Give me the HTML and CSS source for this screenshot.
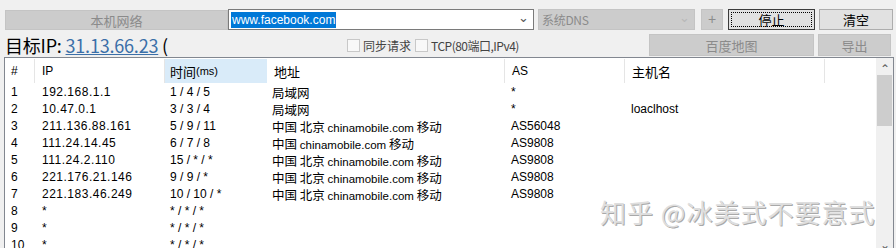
FILE: index.html
```html
<!DOCTYPE html>
<html lang="zh">
<head>
<meta charset="utf-8">
<title>Trace</title>
<link rel="stylesheet" href="styles.css">
</head>
<body>
<div class="app">
  <div class="toolbar">
    <button class="btn disabled local">本机网络</button>
    <div class="combo host">
      <span class="sel">www.facebook.com</span>
      <span class="chev">&#8964;</span>
    </div>
    <div class="combo dns disabled-combo">
      <span class="dns-text">系统DNS</span>
      <span class="chev light">&#8964;</span>
    </div>
    <button class="btn disabled plus">+</button>
    <button class="btn stop"><span class="focus">停止</span></button>
    <button class="btn clear">清空</button>
  </div>
  <div class="row2">
    <div class="target">目标IP: <a class="ip-link">31.13.66.23</a> (</div>
    <label class="chk"><span class="box"></span>同步请求</label>
    <label class="chk tcp"><span class="box"></span>TCP(80端口,IPv4)</label>
    <button class="btn disabled map">百度地图</button>
    <button class="btn disabled export">导出</button>
  </div>
  <div class="list">
    <div class="grid">
      <div class="head">
        <div class="hc c1">#</div>
        <div class="hc c2">IP</div>
        <div class="hc c3 hot">时间<span class="ms">(ms)</span></div>
        <div class="hc c4">地址</div>
        <div class="hc c5">AS</div>
        <div class="hc c6">主机名</div>
        <div class="hc c7"></div>
      </div>
      <div class="body">
        <div class="r"><span>1</span><span class="ip">192.168.1.1</span><span>1 / 4 / 5</span><span class="zh">局域网</span><span>*</span><span></span></div>
        <div class="r"><span>2</span><span class="ip">10.47.0.1</span><span>3 / 3 / 4</span><span class="zh">局域网</span><span>*</span><span>loaclhost</span></div>
        <div class="r"><span>3</span><span class="ip">211.136.88.161</span><span>5 / 9 / 11</span><span class="zh">中国 北京 <i>chinamobile.com</i> 移动</span><span>AS56048</span><span></span></div>
        <div class="r"><span>4</span><span class="ip">111.24.14.45</span><span>6 / 7 / 8</span><span class="zh">中国 <i>chinamobile.com</i> 移动</span><span>AS9808</span><span></span></div>
        <div class="r"><span>5</span><span class="ip">111.24.2.110</span><span>15 / * / *</span><span class="zh">中国 北京 <i>chinamobile.com</i> 移动</span><span>AS9808</span><span></span></div>
        <div class="r"><span>6</span><span class="ip">221.176.21.146</span><span>9 / 9 / *</span><span class="zh">中国 北京 <i>chinamobile.com</i> 移动</span><span>AS9808</span><span></span></div>
        <div class="r"><span>7</span><span class="ip">221.183.46.249</span><span>10 / 10 / *</span><span class="zh">中国 北京 <i>chinamobile.com</i> 移动</span><span>AS9808</span><span></span></div>
        <div class="r"><span>8</span><span class="ip">*</span><span>* / * / *</span><span></span><span></span><span></span></div>
        <div class="r"><span>9</span><span class="ip">*</span><span>* / * / *</span><span></span><span></span><span></span></div>
        <div class="r"><span>10</span><span class="ip">*</span><span>* / * / *</span><span></span><span></span><span></span></div>
      </div>
    </div>
    <div class="scroll">
      <div class="arrow up">&#8963;</div>
      <div class="thumb"></div>
      <div class="track"></div>
      <div class="arrow down">&#8964;</div>
    </div>
  </div>
  <div class="watermark">知乎 @冰美式不要意式</div>
</div>
</body>
</html>
```
FILE: styles.css
```css
* { box-sizing: border-box; }
html, body { margin: 0; padding: 0; }
body {
  width: 896px;
  height: 248px;
  overflow: hidden;
  background: #f0f0f0;
  font-family: "Liberation Sans", "Noto Sans CJK SC", sans-serif;
  font-size: 12px;
  color: #000;
}
.app { position: relative; width: 896px; height: 248px; }

.toolbar {
  display: flex;
  align-items: stretch;
  padding: 9px 0 0 5px;
  height: 30px;
}
.btn {
  font-family: "Noto Sans CJK SC", "Liberation Sans", sans-serif;
  font-size: 13px;
  background: #e1e1e1;
  border: 1px solid #adadad;
  color: #000;
  padding: 0;
  margin: 0;
  line-height: 19px;
  display: flex;
  align-items: center;
  justify-content: center;
}
.btn.disabled {
  background: #cccccc;
  border-color: #c4c4c4;
  color: #8b8b8b;
}
.local { width: 223px; margin-top: 1px; }
.combo {
  height: 21px;
  border: 1px solid #7a7a7a;
  background: #fff;
  display: flex;
  align-items: center;
  position: relative;
}
.host { width: 306px; padding-left: 2px; }
.sel {
  background: #0078d7;
  color: #fff;
  font-size: 12px;
  line-height: 16px;
  padding: 0 1px;
}
.chev {
  margin-left: auto;
  margin-right: 4px;
  color: #555;
  font-size: 13px;
  line-height: 10px;
  height: 14px;
}
.chev.light { color: #b8b8b8; }
.dns {
  width: 157px;
  margin-left: 4px;
  background: #cccccc;
  border-color: #c4c4c4;
  padding-left: 3px;
}
.dns-text {
  font-family: "Noto Sans CJK SC", sans-serif;
  font-size: 12px;
  color: #8b8b8b;
  letter-spacing: -0.3px;
}
.plus { width: 22px; margin-left: 6px; font-family: "Liberation Sans", sans-serif; font-size: 14px; }
.stop {
  width: 87px;
  margin-left: 5px;
  border-color: #3c3c3c;
  padding: 2px;
}
.focus {
  flex: 1;
  align-self: stretch;
  border: 1px dotted #000;
  display: flex;
  align-items: center;
  justify-content: center;
}
.clear { width: 74px; margin-left: 4px; }

.row2 {
  display: flex;
  align-items: center;
  height: 24px;
  padding-left: 5px;
  margin-top: 3px;
}
.target {
  font-family: "Noto Sans CJK SC", sans-serif;
  font-size: 18px;
  line-height: 22px;
  width: 338px;
  letter-spacing: -0.2px;
  white-space: nowrap;
}
.ip-link { color: #3b6fa8; text-decoration: underline; text-decoration-thickness: 1px; }
.chk {
  display: flex;
  align-items: center;
  font-family: "Noto Sans CJK SC", sans-serif;
  font-size: 12px;
  color: #444;
  margin-left: 4px;
}
.chk.tcp { margin-left: 4px; letter-spacing: -0.5px; }
.box {
  width: 13px;
  height: 13px;
  border: 1px solid #c8c8c8;
  background: #f8f8f8;
  margin-right: 3px;
}
.map { width: 165px; height: 22px; margin-left: auto; }
.export { width: 73px; height: 22px; margin-left: 4px; margin-right: 5px; }

.list {
  position: absolute;
  left: 4px;
  top: 57px;
  width: 890px;
  height: 200px;
  border: 1px solid #828790;
  background: #fff;
  display: flex;
}
.grid { flex: 1; overflow: hidden; }
.head {
  display: grid;
  grid-template-columns: 30px 130px 102px 238px 120px 200px 1fr;
  height: 26px;
}
.hc {
  display: flex;
  align-items: center;
  padding-left: 7px;
  font-family: "Noto Sans CJK SC", "Liberation Sans", sans-serif;
  font-size: 13px;
  border-right: 1px solid #e5e5e5;
  margin: 1px 0 1px 0;
}
.hc.c1 { padding-left: 6px; font-family: "Liberation Sans", sans-serif; font-size: 12px; }
.hc.c2, .hc.c5 { font-family: "Liberation Sans", sans-serif; font-size: 12px; }
.hc.c3 { border-right: none; }
.hc.c7 { border-right: none; }
.hot { background: #d9ebf9; padding-left: 5px; }
.ms { font-family: "Liberation Sans", sans-serif; font-size: 11px; }

.r {
  display: grid;
  grid-template-columns: 30px 130px 102px 238px 120px 200px 1fr;
  height: 17px;
  font-size: 12px;
}
.r span {
  display: block;
  height: 17px;
  line-height: 17px;
  padding-left: 6px;
  white-space: nowrap;
}
.r span.ip { letter-spacing: 0.5px; padding-left: 7px; }
.r span:nth-child(3) { padding-left: 5px; }
.r span.zh {
  font-family: "Noto Sans CJK SC", sans-serif;
  font-size: 12.5px;
  line-height: 17px;
  padding-left: 5px;
}
.zh i {
  font-style: normal;
  font-family: "Liberation Sans", sans-serif;
  font-size: 11.5px;
  line-height: 1;
}

.scroll {
  width: 17px;
  background: #f0f0f0;
  display: flex;
  flex-direction: column;
}
.arrow {
  height: 17px;
  display: flex;
  align-items: center;
  justify-content: center;
  color: #606060;
  font-size: 12px;
  line-height: 1;
}
.arrow.up { padding-top: 4px; }
.arrow.down { padding-bottom: 6px; }
.thumb { height: 51px; margin: 0 1px; background: #cdcdcd; }
.track { flex: 1; }

.watermark {
  position: absolute;
  left: 600px;
  top: 193px;
  font-family: "Noto Sans CJK SC", sans-serif;
  font-size: 26px;
  letter-spacing: 1px;
  color: #dedede;
  text-shadow: 1px 1px 0 #a9a9a9;
  white-space: nowrap;
}
```
